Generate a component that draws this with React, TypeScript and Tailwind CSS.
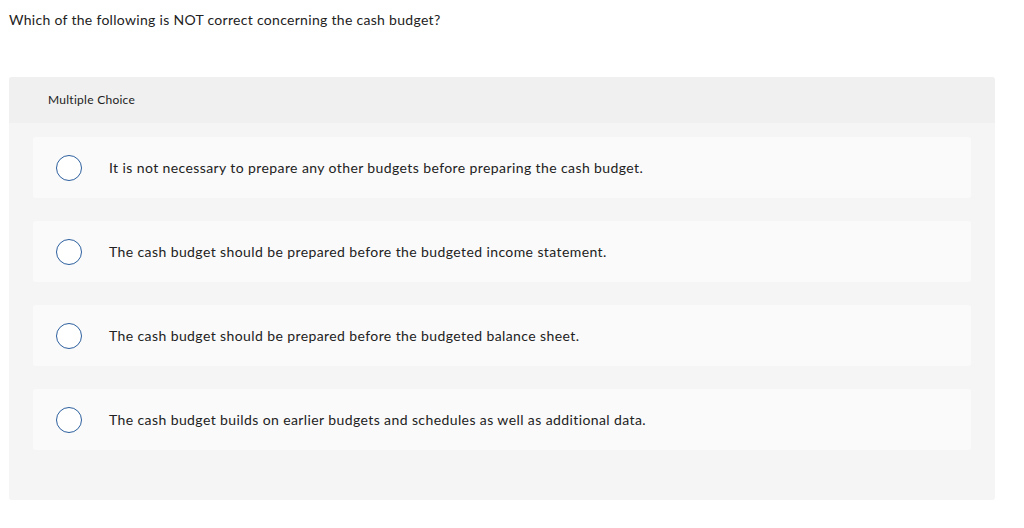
const options = [
  "It is not necessary to prepare any other budgets before preparing the cash budget.",
  "The cash budget should be prepared before the budgeted income statement.",
  "The cash budget should be prepared before the budgeted balance sheet.",
  "The cash budget builds on earlier budgets and schedules as well as additional data.",
];

export default function App() {
  return (
    <div className="w-[1024px] h-[528px] bg-white text-[#222] font-['Lato',sans-serif]">
      {/* question */}
      <div className="pt-[11px] pl-[9px] text-[14px] leading-[18px] tracking-[0.3px]">
        Which of the following is NOT correct concerning the cash budget?
      </div>

      {/* answer panel */}
      <div className="mt-[48px] ml-[9px] w-[986px] rounded-[3px] bg-[#f5f5f5] overflow-hidden">
        <div className="h-[46px] bg-[#f0f0f0] pl-[39px] flex items-center text-[12px] tracking-[0.27px]">
          Multiple Choice
        </div>
        <div className="px-[24px] pt-[14px] pb-[50px] flex flex-col gap-[23px]">
          {options.map((opt) => (
            <div key={opt} className="h-[61px] rounded-[3px] bg-[#fafafa] flex items-center">
              <div className="ml-[23px] w-[26px] h-[26px] rounded-full border border-[#2c5f9e] bg-white shrink-0" />
              <div className="ml-[27px] text-[14px] tracking-[0.4px]">{opt}</div>
            </div>
          ))}
        </div>
      </div>
    </div>
  );
}
